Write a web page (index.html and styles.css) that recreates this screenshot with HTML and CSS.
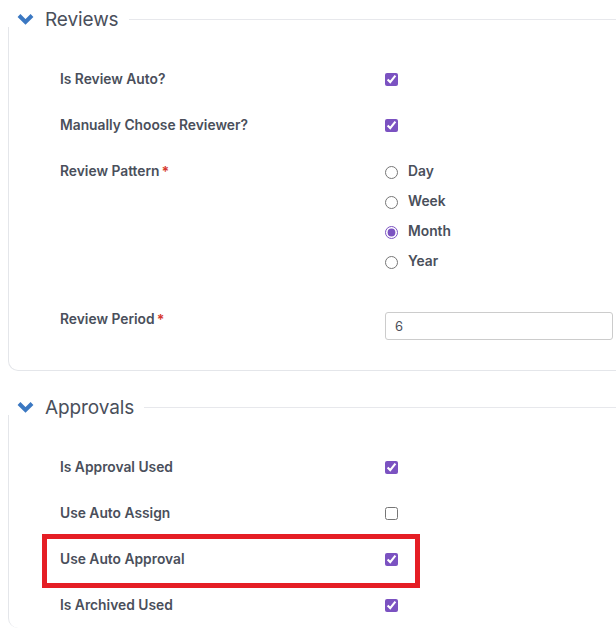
FILE: index.html
```html
<!DOCTYPE html>
<html>
<head>
<meta charset="utf-8">
<link rel="stylesheet" href="styles.css">
</head>
<body>
<section class="group">
  <div class="group-head">
    <svg class="chev" width="17" height="12" viewBox="0 0 17 12"><polyline points="2,2.5 8.5,9 15,2.5" fill="none" stroke="#3b78c2" stroke-width="4" stroke-linecap="butt" stroke-linejoin="miter"/></svg>
    <span class="group-title">Reviews</span>
    <span class="group-line"></span>
  </div>
  <div class="group-body">
    <div class="row">
      <div class="label">Is Review Auto?</div>
      <div class="control"><input type="checkbox" checked></div>
    </div>
    <div class="row">
      <div class="label">Manually Choose Reviewer?</div>
      <div class="control"><input type="checkbox" checked></div>
    </div>
    <div class="row">
      <div class="label">Review Pattern<span class="req">*</span></div>
      <div class="control radios">
        <label class="radio"><input type="radio" name="p">Day</label>
        <label class="radio"><input type="radio" name="p">Week</label>
        <label class="radio"><input type="radio" name="p" checked>Month</label>
        <label class="radio"><input type="radio" name="p">Year</label>
      </div>
    </div>
    <div class="row row-period">
      <div class="label">Review Period<span class="req">*</span></div>
      <div class="control control-input"><input class="text" type="text" value="6"></div>
    </div>
  </div>
</section>

<section class="group group-second">
  <div class="group-head">
    <svg class="chev" width="17" height="12" viewBox="0 0 17 12"><polyline points="2,2.5 8.5,9 15,2.5" fill="none" stroke="#3b78c2" stroke-width="4" stroke-linecap="butt" stroke-linejoin="miter"/></svg>
    <span class="group-title">Approvals</span>
    <span class="group-line"></span>
  </div>
  <div class="group-body open">
    <div class="row">
      <div class="label">Is Approval Used</div>
      <div class="control"><input type="checkbox" checked></div>
    </div>
    <div class="row">
      <div class="label">Use Auto Assign</div>
      <div class="control"><input type="checkbox"></div>
    </div>
    <div class="row highlighted">
      <div class="label">Use Auto Approval</div>
      <div class="control"><input type="checkbox" checked></div>
    </div>
    <div class="row">
      <div class="label">Is Archived Used</div>
      <div class="control"><input type="checkbox" checked></div>
    </div>
  </div>
</section>
</body>
</html>
```

FILE: styles.css
```css
html, body {
  margin: 0;
  padding: 0;
  background: #ffffff;
  overflow: hidden;
}
body {
  font-family: Inter, "Noto Sans", Arial, sans-serif;
  color: #4a4f5b;
  width: 616px;
  height: 629px;
}

.group-head {
  display: flex;
  align-items: center;
  height: 38px;
  padding-left: 17px;
}
.chev {
  display: block;
  flex: none;
}
.group-title {
  margin-left: 11px;
  font-size: 19px;
  font-weight: 400;
  color: #4a4f5b;
  letter-spacing: -0.1px;
}
.group-line {
  flex: 1;
  height: 1px;
  background: #e7e8ec;
  margin-left: 10px;
}

.group-body {
  margin-top: -11px;
  margin-left: 8px;
  margin-right: -30px;
  border-left: 1px solid #e4e6ea;
  border-bottom: 1px solid #e4e6ea;
  border-bottom-left-radius: 10px;
  padding-top: 29px;
  padding-bottom: 30px;
}
.group-body.open {
  border-bottom: none;
  padding-bottom: 0;
}
.group-second {
  margin-top: 17px;
}

.row {
  display: grid;
  grid-template-columns: 325px 1fr;
  padding: 12px 0;
  padding-left: 51px;
  line-height: 22px;
  position: relative;
}
.row-period {
  padding-top: 24px;
  padding-bottom: 0;
}
.label {
  font-size: 13.8px;
  font-weight: 600;
  color: #4a4f5b;
}
.req {
  color: #d63a30;
  margin-left: 2px;
  font-weight: 700;
}

.control {
  display: flex;
  align-items: center;
  height: 22px;
}
.control-input {
  height: auto;
  align-items: flex-start;
}
.control input[type="checkbox"],
.control input[type="radio"] {
  margin: 0;
  width: 13px;
  height: 13px;
  accent-color: #7b52c1;
}
.radios {
  display: flex;
  flex-direction: column;
  align-items: flex-start;
  height: auto;
  gap: 8px;
}
.radio {
  display: flex;
  align-items: center;
  gap: 10px;
  height: 22px;
  font-size: 13.8px;
  font-weight: 600;
  color: #4a4f5b;
}
.radio input {
  position: relative;
  top: 1px;
}

.text {
  margin-top: 4px;
  box-sizing: border-box;
  width: 228px;
  height: 28px;
  border: 1px solid #cccccc;
  border-radius: 3px;
  padding: 0 9px;
  font-family: Inter, "Noto Sans", Arial, sans-serif;
  font-size: 13px;
  color: #4a4f5b;
  outline: none;
}

.highlighted::after {
  content: "";
  position: absolute;
  left: 33px;
  top: -2px;
  width: 378px;
  height: 54px;
  box-sizing: border-box;
  border: 5px solid #e51e25;
  pointer-events: none;
}
```
